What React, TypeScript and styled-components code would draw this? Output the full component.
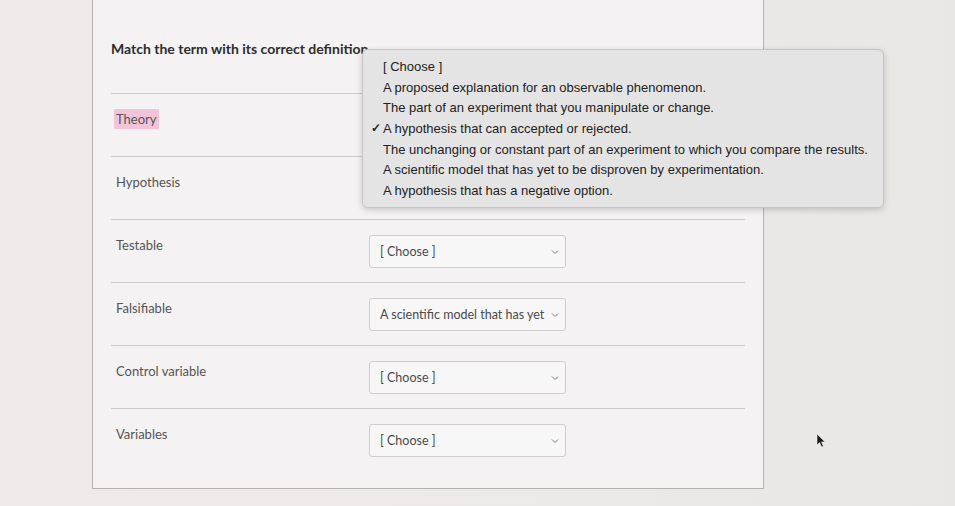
import React from "react";
import styled, { createGlobalStyle } from "styled-components";

const GlobalStyle = createGlobalStyle`
  html, body { margin: 0; padding: 0; }
  body {
    background: #ece9e9;
    font-family: Lato, "Open Sans", sans-serif;
    -webkit-font-smoothing: antialiased;
  }
`;

const Page = styled.div`
  position: relative;
  width: 955px;
  height: 506px;
  overflow: hidden;
  padding-left: 92px;
  box-sizing: border-box;
  background: linear-gradient(90deg, #eeeaea 0%, #ece9e9 60%, #e9e7e6 100%);
`;

const Card = styled.div`
  width: 672px;
  box-sizing: border-box;
  background: #f4f2f2;
  border: 1px solid #b4b2b2;
  border-top: none;
  padding: 40px 18px 17px 18px;
`;

const Title = styled.h2`
  margin: 0 0 35px 0;
  font-size: 14px;
  line-height: 18px;
  font-weight: 700;
  color: #2d2d2d;
  white-space: nowrap;
`;

const Row = styled.div`
  display: grid;
  grid-template-columns: 259px 196px;
  border-top: 1px solid #cbc9c9;
  padding: 15px 0 14px 0;
`;

const Label = styled.div<{ $highlight?: boolean }>`
  padding: 2px 0 0 5px;
  font-size: 13px;
  line-height: 16px;
  color: #555;
  span {
    display: inline-block;
    padding: 2px 2px;
    margin: -2px 0 0 -2px;
    background: ${(p) => (p.$highlight ? "#f2c4da" : "transparent")};
    border-radius: 1px;
  }
`;

const Select = styled.div`
  height: 33px;
  box-sizing: border-box;
  margin-left: -1px;
  border: 1px solid #cfcdcd;
  border-radius: 3px;
  background: #f8f7f7;
  display: flex;
  align-items: center;
  padding: 0 6px 0 10px;
  gap: 6px;
`;

const Value = styled.span`
  flex: 1;
  min-width: 0;
  overflow: hidden;
  white-space: nowrap;
  font-size: 12.5px;
  color: #4a4a4a;
`;

const Chevron = styled.svg`
  flex: none;
  width: 8px;
  height: 6px;
`;

const Listbox = styled.div`
  position: absolute;
  left: 362px;
  top: 49px;
  width: 522px;
  box-sizing: border-box;
  padding: 6px 0 6px 0;
  background: #e5e4e4;
  border: 1px solid #c6c5c5;
  border-radius: 6px;
  box-shadow: 0 2px 6px rgba(0, 0, 0, 0.18);
  font-family: "Liberation Sans", Arial, sans-serif;
`;

const Option = styled.div`
  display: grid;
  grid-template-columns: 20px 1fr;
  height: 20.7px;
  align-items: center;
  font-size: 13px;
  color: #222;
  white-space: nowrap;
`;

const Check = styled.span`
  text-align: right;
  padding-right: 2px;
  font-size: 12px;
  font-weight: 700;
  color: #222;
`;

const Cursor = styled.svg`
  position: absolute;
  left: 816px;
  top: 433px;
  width: 11px;
  height: 15px;
`;

const rows = [
  { term: "Theory", value: "A hypothesis that can accepted or rejected.", highlight: true },
  { term: "Hypothesis", value: "[ Choose ]" },
  { term: "Testable", value: "[ Choose ]" },
  { term: "Falsifiable", value: "A scientific model that has yet to be disproven by experimentation." },
  { term: "Control variable", value: "[ Choose ]" },
  { term: "Variables", value: "[ Choose ]" },
];

const options = [
  "[ Choose ]",
  "A proposed explanation for an observable phenomenon.",
  "The part of an experiment that you manipulate or change.",
  "A hypothesis that can accepted or rejected.",
  "The unchanging or constant part of an experiment to which you compare the results.",
  "A scientific model that has yet to be disproven by experimentation.",
  "A hypothesis that has a negative option.",
];

export default function App() {
  return (
    <>
      <GlobalStyle />
      <Page>
        <Card>
          <Title>Match the term with its correct definition.</Title>
          {rows.map((r) => (
            <Row key={r.term}>
              <Label $highlight={r.highlight}>
                <span>{r.term}</span>
              </Label>
              <Select>
                <Value>{r.value}</Value>
                <Chevron viewBox="0 0 8 6">
                  <path d="M1 1.5 L4 4.5 L7 1.5" fill="none" stroke="#777" strokeWidth="1" />
                </Chevron>
              </Select>
            </Row>
          ))}
        </Card>
        <Listbox>
          {options.map((o, i) => (
            <Option key={o}>
              <Check>{i === 3 ? "✓" : ""}</Check>
              <span>{o}</span>
            </Option>
          ))}
        </Listbox>
        <Cursor viewBox="0 0 11 15">
          <path d="M1 1 L1 12 L3.6 9.6 L5.6 14 L7.4 13.2 L5.5 8.9 L9 8.9 Z" fill="#1a1a1a" stroke="#eee" strokeWidth="0.6" />
        </Cursor>
      </Page>
    </>
  );
}
